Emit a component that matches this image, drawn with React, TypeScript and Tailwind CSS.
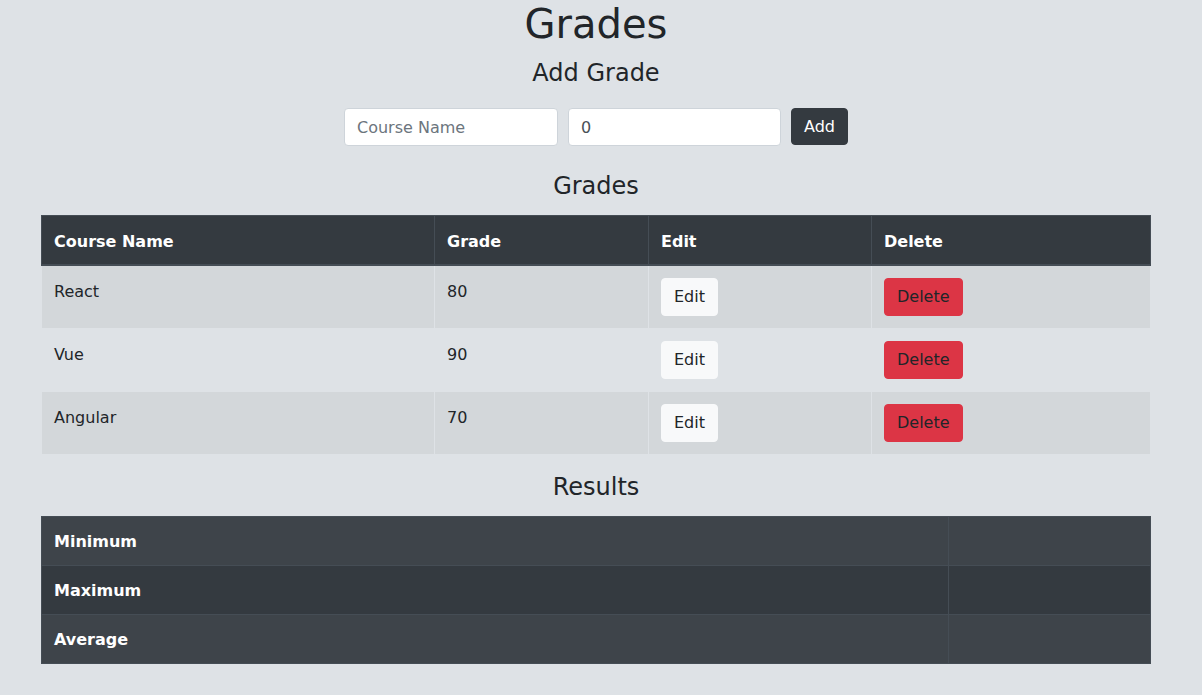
import React, { useState } from 'react';

interface Grade {
  id: number;
  courseName: string;
  grade: number;
}

const initialGrades: Grade[] = [
  { id: 1, courseName: 'React', grade: 80 },
  { id: 2, courseName: 'Vue', grade: 90 },
  { id: 3, courseName: 'Angular', grade: 70 },
];

const App: React.FC = () => {
  const [grades, setGrades] = useState<Grade[]>(initialGrades);
  const [courseName, setCourseName] = useState('');
  const [grade, setGrade] = useState('0');

  const handleAdd = () => {
    if (!courseName) return;
    setGrades([...grades, { id: Date.now(), courseName, grade: Number(grade) }]);
    setCourseName('');
    setGrade('0');
  };

  const handleDelete = (id: number) => {
    setGrades(grades.filter((g) => g.id !== id));
  };

  return (
    <div className="min-h-screen bg-[#dee2e6] pb-[30px] pl-[41px] font-['DejaVu_Sans',sans-serif] text-[16px] leading-6 text-[#212529]">
      <div className="w-[1110px]">
        <h1 className="text-center text-[40px] leading-[48px] font-normal">Grades</h1>
        <h4 className="mt-[11px] text-center text-[24px] leading-[28.8px] font-normal">Add Grade</h4>

        {/* Форма добавления */}
        <div className="mt-[20px] flex justify-center gap-[10px]">
          <input
            type="text"
            placeholder="Course Name"
            value={courseName}
            onChange={(e) => setCourseName(e.target.value)}
            className="h-[38px] w-[214px] rounded-[4px] border border-[#ced4da] bg-white px-3 pt-[2px] text-[16px] text-[#495057] outline-none placeholder:text-[#6c757d]"
          />
          <input
            type="text"
            value={grade}
            onChange={(e) => setGrade(e.target.value)}
            className="h-[38px] w-[213px] rounded-[4px] border border-[#ced4da] bg-white px-3 pt-[2px] text-[16px] text-[#495057] outline-none"
          />
          <button
            onClick={handleAdd}
            className="h-[37px] w-[57px] rounded-[4px] border border-[#343a40] bg-[#343a40] pt-[2px] text-[16px] text-white"
          >
            Add
          </button>
        </div>

        <h4 className="mt-[26px] text-center text-[24px] leading-[28.8px] font-normal">Grades</h4>

        {/* Таблица оценок */}
        <table className="mt-[14px] w-[1109px] table-fixed border-collapse">
          <colgroup>
            <col className="w-[393px]" />
            <col className="w-[214px]" />
            <col className="w-[223px]" />
            <col className="w-[279px]" />
          </colgroup>
          <thead>
            <tr className="bg-[#343a40] text-white">
              <th className="border border-b-2 border-[#454d55] px-3 pt-[14px] pb-[10px] text-left font-bold">Course Name</th>
              <th className="border border-b-2 border-[#454d55] px-3 pt-[14px] pb-[10px] text-left font-bold">Grade</th>
              <th className="border border-b-2 border-[#454d55] px-3 pt-[14px] pb-[10px] text-left font-bold">Edit</th>
              <th className="border border-b-2 border-[#454d55] px-3 pt-[14px] pb-[10px] text-left font-bold">Delete</th>
            </tr>
          </thead>
          <tbody>
            {grades.map((g, index) => (
              <tr key={g.id} className={index % 2 === 0 ? 'bg-[#d3d7da]' : ''}>
                <td className="border border-[#dee2e6] px-3 pt-[14px] pb-[10px] align-top">{g.courseName}</td>
                <td className="border border-[#dee2e6] px-3 pt-[14px] pb-[10px] align-top">{g.grade}</td>
                <td className="border border-[#dee2e6] px-3 py-3 align-top">
                  <button className="h-[38px] rounded-[4px] border border-[#f8f9fa] bg-[#f8f9fa] px-3 pt-[1px] text-[16px] text-[#212529]">
                    Edit
                  </button>
                </td>
                <td className="border border-[#dee2e6] px-3 py-3 align-top">
                  <button
                    onClick={() => handleDelete(g.id)}
                    className="h-[38px] rounded-[4px] border border-[#dc3545] bg-[#dc3545] px-3 pt-[1px] text-[16px] text-[#212529]"
                  >
                    Delete
                  </button>
                </td>
              </tr>
            ))}
          </tbody>
        </table>

        <h4 className="mt-[18px] text-center text-[24px] leading-[28.8px] font-normal">Results</h4>

        {/* Итоги */}
        <table className="mt-[15px] w-[1109px] table-fixed border-collapse bg-[#343a40] text-white">
          <colgroup>
            <col className="w-[907px]" />
            <col className="w-[202px]" />
          </colgroup>
          <tbody>
            {['Minimum', 'Maximum', 'Average'].map((label, index) => (
              <tr key={label} className={index % 2 === 0 ? 'bg-[#3e444a]' : ''}>
                <th className="border border-[#454d55] px-3 pt-[13px] pb-[11px] text-left font-bold">{label}</th>
                <td className="border border-[#454d55] px-3 pt-[13px] pb-[11px]"></td>
              </tr>
            ))}
          </tbody>
        </table>
      </div>
    </div>
  );
};

export default App;
